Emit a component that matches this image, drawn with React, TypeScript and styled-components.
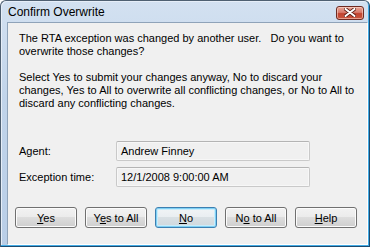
import React from 'react';
import styled, { createGlobalStyle } from 'styled-components';

const GlobalStyle = createGlobalStyle`
  html, body {
    margin: 0;
    padding: 0;
    background: #ffffff;
  }
  body {
    font-family: 'Liberation Sans', Arial, sans-serif;
    font-size: 11px;
    color: #000000;
  }
`;

const Window = styled.div`
  box-sizing: border-box;
  width: 370px;
  height: 247px;
  display: flex;
  flex-direction: column;
  padding: 0 1px 1px 6px;
  border: 1px solid #4f6072;
  border-right-color: #1d4a6e;
  border-bottom-color: #1d4a6e;
  border-radius: 6px 6px 0 0;
  background: linear-gradient(180deg, #d3e1f1 0%, #c1d4ea 40%, #b9cee7 100%);
  box-shadow: inset -1px -1px 0 #43ace6, inset 1px 1px 0 #e6eef8;
  overflow: hidden;
`;

const TitleBar = styled.div`
  height: 21px;
  display: flex;
  align-items: center;
  justify-content: space-between;
  padding: 0 4px 0 1px;
  flex-shrink: 0;
`;

const Title = styled.span`
  font-family: 'Liberation Sans', Arial, sans-serif;
  font-size: 12px;
  color: #000000;
  padding-top: 1px;
`;

const CloseButton = styled.button`
  box-sizing: border-box;
  width: 28px;
  height: 14px;
  margin-top: 2px;
  padding: 0;
  display: flex;
  align-items: center;
  justify-content: center;
  border: 1px solid #6e2a22;
  border-radius: 3px;
  background: linear-gradient(180deg, #e9a898 0%, #d8796a 45%, #c2432f 55%, #c9573f 100%);
  box-shadow: inset 0 0 0 1px rgba(255, 220, 210, 0.55);
`;

const Client = styled.div`
  flex: 1;
  display: flex;
  flex-direction: column;
  background: #f0f0f0;
  border-top: 1px solid #8fa3b9;
  border-left: 1px solid #8fa3b9;
  border-right: 1px solid #ffffff;
  border-bottom: 1px solid #ffffff;
  padding-top: 9px;
`;

const Message = styled.p`
  margin: 0;
  padding: 0 11px;
  line-height: 13px;
`;

const Fields = styled.div`
  display: flex;
  flex-direction: column;
  gap: 6px;
  padding-left: 11px;
  margin-top: 31px;
`;

const FieldRow = styled.div`
  display: grid;
  grid-template-columns: 97px 194px;
  align-items: center;
`;

const Label = styled.span`
  line-height: 13px;
`;

const ReadOnlyBox = styled.div`
  box-sizing: border-box;
  height: 20px;
  display: flex;
  align-items: center;
  padding: 0 4px;
  border: 1px solid #c9c9c9;
  border-top-color: #b4b4b4;
  border-radius: 2px;
  background: #f0f0f0;
  box-shadow: inset 0 0 0 1px #f7f7f7;
`;

const ButtonRow = styled.div`
  display: flex;
  gap: 8px;
  padding-left: 7px;
  margin-top: 20px;
`;

const DialogButton = styled.button<{ $default?: boolean }>`
  box-sizing: border-box;
  width: 62px;
  height: 21px;
  padding: 0;
  font-family: 'Liberation Sans', Arial, sans-serif;
  font-size: 11px;
  color: #000000;
  border: 1px solid ${(p) => (p.$default ? '#3c7fb1' : '#707070')};
  border-radius: 3px;
  background: ${(p) =>
    p.$default
      ? 'linear-gradient(180deg, #f1f4f6 0%, #e9eef1 49%, #d9e0e4 50%, #cfd8dd 100%)'
      : 'linear-gradient(180deg, #f2f2f2 0%, #ebebeb 49%, #dddddd 50%, #cfcfcf 100%)'};
  box-shadow: ${(p) =>
    p.$default ? 'inset 0 0 0 1px #7fd0f4, inset 0 0 0 2px #c9ecfb' : 'inset 0 0 0 1px #fcfcfc'};

  u {
    text-decoration: underline;
    text-underline-offset: 1px;
  }
`;

function CloseGlyph() {
  return (
    <svg width="12" height="9" viewBox="0 0 12 9">
      <path
        d="M1.5 1 L10.5 8 M10.5 1 L1.5 8"
        stroke="#5a1c14"
        strokeWidth="3.6"
        strokeLinecap="round"
      />
      <path
        d="M1.5 1 L10.5 8 M10.5 1 L1.5 8"
        stroke="#ffffff"
        strokeWidth="2"
        strokeLinecap="round"
      />
    </svg>
  );
}

export default function App() {
  return (
    <>
      <GlobalStyle />
      <Window>
        <TitleBar>
          <Title>Confirm Overwrite</Title>
          <CloseButton aria-label="Close">
            <CloseGlyph />
          </CloseButton>
        </TitleBar>
        <Client>
          <Message>
            The RTA exception was changed by another user.&nbsp;&nbsp; Do you want to
            <br />
            overwrite those changes?
            <br />
            <br />
            Select Yes to submit your changes anyway, No to discard your
            <br />
            changes, Yes to All to overwrite all conflicting changes, or No to All to
            <br />
            discard any conflicting changes.
          </Message>
          <Fields>
            <FieldRow>
              <Label>Agent:</Label>
              <ReadOnlyBox>Andrew Finney</ReadOnlyBox>
            </FieldRow>
            <FieldRow>
              <Label>Exception time:</Label>
              <ReadOnlyBox>12/1/2008 9:00:00 AM</ReadOnlyBox>
            </FieldRow>
          </Fields>
          <ButtonRow>
            <DialogButton>
              <u>Y</u>es
            </DialogButton>
            <DialogButton>
              Y<u>e</u>s to All
            </DialogButton>
            <DialogButton $default>
              <u>N</u>o
            </DialogButton>
            <DialogButton>
              N<u>o</u> to All
            </DialogButton>
            <DialogButton>
              <u>H</u>elp
            </DialogButton>
          </ButtonRow>
        </Client>
      </Window>
    </>
  );
}
